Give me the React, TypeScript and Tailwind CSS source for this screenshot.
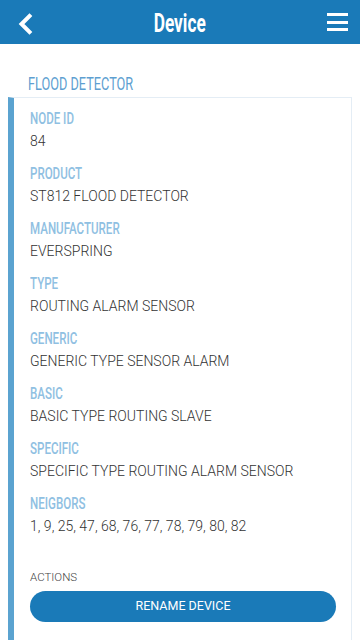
import React from "react";

const rows: [string, string][] = [
  ["NODE ID", "84"],
  ["PRODUCT", "ST812 FLOOD DETECTOR"],
  ["MANUFACTURER", "EVERSPRING"],
  ["TYPE", "ROUTING ALARM SENSOR"],
  ["GENERIC", "GENERIC TYPE SENSOR ALARM"],
  ["BASIC", "BASIC TYPE ROUTING SLAVE"],
  ["SPECIFIC", "SPECIFIC TYPE ROUTING ALARM SENSOR"],
  ["NEIGBORS", "1, 9, 25, 47, 68, 76, 77, 78, 79, 80, 82"],
];

export default function App() {
  return (
    <div className="w-[360px] h-[640px] overflow-hidden bg-white font-['Roboto',sans-serif]">
      <header className="h-[44px] bg-[#1a7ab8] flex items-center justify-between px-[17px] text-white">
        <svg width="16" height="22" viewBox="0 0 16 22" className="mt-[3px]">
          <path d="M12.5 3 L4.5 11 L12.5 19" fill="none" stroke="white" strokeWidth="4" strokeLinecap="square" />
        </svg>
        <div className="font-bold text-[25px] leading-[30px] scale-x-[0.69] origin-center mt-[4px]">Device</div>
        <div className="flex flex-col gap-[4.5px] w-[21px] mr-[-5px]">
          <div className="h-[3px] bg-white" />
          <div className="h-[3px] bg-white" />
          <div className="h-[3px] bg-white" />
        </div>
      </header>
      <div className="pt-[29px] pl-[28px]">
        <div className="text-[19px] text-[#5e9fd1] leading-[22px] scale-x-[0.67] origin-left whitespace-nowrap">FLOOD DETECTOR</div>
      </div>
      <div className="ml-[8px] mr-[8px] mt-[2px] border-l-[6px] border-l-[#5ba3d0] border-t border-r border-[#e4edf5] pl-[16px] pt-[10px] h-[600px]">
        {rows.map(([k, v]) => (
          <div key={k} className="h-[55px]">
            <div className="font-medium text-[17px] text-[#8fc0e2] leading-[20px] scale-x-[0.68] origin-left whitespace-nowrap">{k}</div>
            <div className="font-light text-[14px] text-[#333] leading-[16px] mt-[5px] whitespace-nowrap">{v}</div>
          </div>
        ))}
        <div className="mt-[22px] text-[11.5px] font-light text-[#444] leading-[14px]">ACTIONS</div>
        <button className="mt-[7px] w-[306px] h-[31px] rounded-full bg-[#1a7ab8] text-white text-[12.5px] flex items-center justify-center">
          RENAME DEVICE
        </button>
      </div>
    </div>
  );
}
